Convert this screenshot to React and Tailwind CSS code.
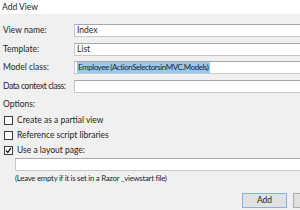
import React from "react";

const font = { fontFamily: 'Lato, "Noto Sans", sans-serif' };

function Input({ children, className = "" }) {
  return (
    <div
      className={
        "h-[13px] flex-1 bg-white border border-[#c8c8c8] border-t-[#a8a8a8] flex items-center pl-[2px] overflow-hidden whitespace-nowrap " +
        className
      }
    >
      {children}
    </div>
  );
}

function Check({ checked }) {
  return (
    <div className="w-[9px] h-[9px] border border-[#3c3c3c] bg-white flex items-center justify-center shrink-0">
      {checked && (
        <svg width="7" height="7" viewBox="0 0 7 7">
          <path d="M1 3.5 L2.8 5.5 L6 1" fill="none" stroke="#222" strokeWidth="1.3" />
        </svg>
      )}
    </div>
  );
}

export default function App() {
  return (
    <div
      className="w-[300px] h-[210px] overflow-hidden bg-[#f0f0f0] text-[8.5px] leading-[11px] text-[#1e1e1e] flex flex-col whitespace-nowrap"
      style={font}
    >
      <div className="h-[14px] bg-white pl-[2px] flex items-center shrink-0">Add View</div>
      <div className="flex flex-col pl-[3px] w-[360px]">
        <div className="flex items-center mt-[10px]">
          <div className="w-[71px] shrink-0">View name:</div>
          <Input>Index</Input>
        </div>
        <div className="flex items-center mt-[6px]">
          <div className="w-[71px] shrink-0">Template:</div>
          <Input>List</Input>
        </div>
        <div className="flex items-center mt-[5px]">
          <div className="w-[71px] shrink-0">Model class:</div>
          <Input className="pl-[1px]">
            <span className="bg-[#99c9ef] px-[1px] leading-[11px] text-[8px] tracking-[-0.45px]">
              Employee (ActionSelectorsinMVC.Models)
            </span>
          </Input>
        </div>
        <div className="flex items-center mt-[6px]">
          <div className="w-[71px] shrink-0 tracking-[-0.4px]">Data context class:</div>
          <Input></Input>
        </div>
        <div className="mt-[6px] h-[11px]">Options:</div>
        <div className="flex items-center gap-[4px] mt-[5px] pl-[1px] h-[11px]">
          <Check />
          <span>Create as a partial view</span>
        </div>
        <div className="flex items-center gap-[4px] mt-[4px] pl-[1px] h-[11px]">
          <Check />
          <span>Reference script libraries</span>
        </div>
        <div className="flex items-center gap-[4px] mt-[4px] pl-[1px] h-[11px]">
          <Check checked />
          <span>Use a layout page:</span>
        </div>
        <div className="flex pl-[12px] mt-[2px]">
          <Input></Input>
        </div>
        <div className="pl-[12px] mt-[2px] h-[11px] text-[7.8px] tracking-[-0.25px]">
          (Leave empty if it is set in a Razor _viewstart file)
        </div>
        <div className="flex mt-[9px] pl-[239px] gap-[6px]">
          <div className="w-[45px] h-[15px] shrink-0 bg-[#e1e1e1] border border-[#7eb4ea] flex items-center justify-center">
            Add
          </div>
          <div className="w-[45px] h-[15px] shrink-0 bg-[#e1e1e1] border border-[#adadad] flex items-center justify-center">
            Cancel
          </div>
        </div>
      </div>
    </div>
  );
}
